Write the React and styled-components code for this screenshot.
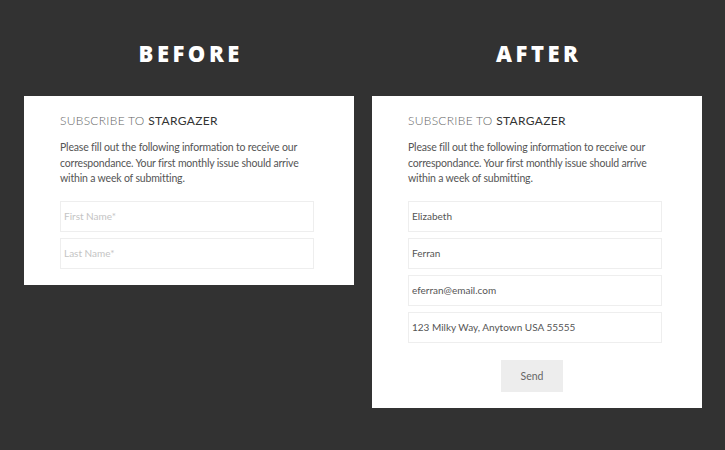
import React from "react";
import styled, { createGlobalStyle } from "styled-components";

const GlobalStyle = createGlobalStyle`
  html, body {
    margin: 0;
    padding: 0;
    background: #323232;
  }
  body {
    font-family: "Lato", "Open Sans", sans-serif;
  }
`;

const Page = styled.div`
  width: 725px;
  height: 450px;
  box-sizing: border-box;
  padding: 38px 0 0 24px;
  display: grid;
  grid-template-columns: 330px 330px;
  column-gap: 18px;
  align-items: start;
`;

const Column = styled.section`
  display: flex;
  flex-direction: column;
  align-items: center;
`;

const Heading = styled.h1`
  margin: 0 0 27px;
  padding-left: 3.5px;
  font-family: "Open Sans", sans-serif;
  font-weight: 800;
  font-size: 22px;
  line-height: 31px;
  letter-spacing: 3.5px;
  color: #ffffff;
`;

const Card = styled.div`
  align-self: stretch;
  background: #ffffff;
  box-sizing: border-box;
  padding: 15px 40px 16px 36px;
  display: flex;
  flex-direction: column;
`;

const Title = styled.h2`
  margin: 0 0 9px;
  font-family: "Lato", sans-serif;
  font-weight: 300;
  font-size: 12px;
  line-height: 20px;
  letter-spacing: 0.3px;
  color: #666;
  text-transform: uppercase;

  strong {
    font-weight: 400;
    color: #333;
  }
`;

const Intro = styled.p`
  margin: 0 0 14px;
  font-size: 10.5px;
  line-height: 15.5px;
  letter-spacing: -0.18px;
  color: #555;
`;

const Fields = styled.div`
  display: flex;
  flex-direction: column;
`;

const Field = styled.input`
  display: block;
  box-sizing: border-box;
  width: 254px;
  height: 31px;
  margin: 0 0 6px;
  padding: 0 3px;
  border: 1px solid #eeeeee;
  background: #fff;
  font-family: "Lato", sans-serif;
  font-size: 10px;
  color: #555;
  outline: none;

  &::placeholder {
    color: #c4c4c4;
  }
  &:last-child {
    margin-bottom: 0;
  }
`;

const Actions = styled.div`
  width: 254px;
  display: flex;
  justify-content: center;
  margin-top: 17px;
`;

const SendButton = styled.button`
  width: 62px;
  height: 32px;
  border: none;
  background: #ededed;
  font-family: "Lato", sans-serif;
  font-size: 10.5px;
  color: #666;
  margin-right: 6px;
  cursor: pointer;
`;

const SubscribeCard = ({ children }) => (
  <Card>
    <Title>
      Subscribe to <strong>Stargazer</strong>
    </Title>
    <Intro>
      Please fill out the following information to receive our
      <br />
      correspondance. Your first monthly issue should arrive
      <br />
      within a week of submitting.
    </Intro>
    {children}
  </Card>
);

export default function App() {
  return (
    <>
      <GlobalStyle />
      <Page>
        <Column>
          <Heading>BEFORE</Heading>
          <SubscribeCard>
            <Fields>
              <Field placeholder="First Name*" readOnly />
              <Field placeholder="Last Name*" readOnly />
            </Fields>
          </SubscribeCard>
        </Column>
        <Column>
          <Heading>AFTER</Heading>
          <SubscribeCard>
            <Fields>
              <Field defaultValue="Elizabeth" />
              <Field defaultValue="Ferran" />
              <Field defaultValue="eferran@email.com" />
              <Field defaultValue="123 Milky Way, Anytown USA 55555" />
            </Fields>
            <Actions>
              <SendButton>Send</SendButton>
            </Actions>
          </SubscribeCard>
        </Column>
      </Page>
    </>
  );
}
